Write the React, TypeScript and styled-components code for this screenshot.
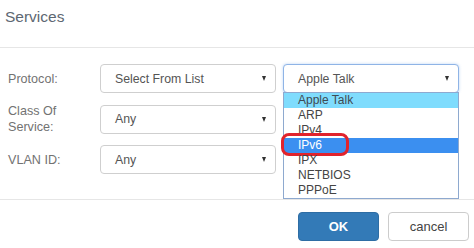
import React from "react";
import styled, { createGlobalStyle, css } from "styled-components";

const Global = createGlobalStyle`
  html, body { margin: 0; padding: 0; background: #ffffff; }
  body { font-family: "Liberation Sans", Arial, sans-serif; }
`;

const Dialog = styled.div`
  width: 474px;
  height: 248px;
  background: #fff;
  display: flex;
  flex-direction: column;
  overflow: hidden;
`;

const Header = styled.div`
  height: 47px;
  border-bottom: 1px solid #e6e6e6;
  padding: 0 5px;
  display: flex;
  align-items: flex-start;
  box-sizing: content-box;
`;

const Title = styled.h4`
  margin: 8px 0 0;
  font-size: 15.5px;
  font-weight: normal;
  color: #5d6772;
`;

const Body = styled.div`
  height: 151px;
  padding: 16px 0 0 8px;
  box-sizing: border-box;
  display: grid;
  grid-template-columns: 85px 176px 176px;
  grid-auto-rows: 29px;
  column-gap: 7px;
  row-gap: 11.5px;
  align-items: center;
`;

const Label = styled.label`
  font-size: 12.6px;
  line-height: 16px;
  color: #727272;
  width: 70px;
`;

const Field = styled.div`
  position: relative;
  height: 29px;
`;

const Select = styled.div<{ $focus?: boolean }>`
  height: 29px;
  box-sizing: border-box;
  border: 1px solid #cfcfcf;
  border-radius: 4px;
  padding: 0 9px 0 14px;
  display: flex;
  align-items: center;
  justify-content: space-between;
  font-size: 12.3px;
  color: #555;
  background: #fff;
  ${(p) =>
    p.$focus &&
    css`
      border-color: #8fb4e6;
      box-shadow: 0 0 3px rgba(102, 160, 233, 0.45);
    `}
`;

const Arrow = styled.span`
  width: 0;
  height: 0;
  border-left: 2.5px solid transparent;
  border-right: 2.5px solid transparent;
  border-top: 5px solid #333;
`;

const List = styled.ul`
  position: absolute;
  top: 28px;
  left: 0;
  width: 100%;
  box-sizing: border-box;
  margin: 0;
  padding: 0;
  list-style: none;
  border: 1px solid #8ea9cf;
  background: #fff;
  z-index: 5;
`;

const Item = styled.li<{ $tone?: "hover" | "selected" }>`
  height: 15px;
  line-height: 15px;
  padding-left: 14px;
  font-size: 12px;
  color: #444;
  position: relative;
  ${(p) =>
    p.$tone === "hover" &&
    css`
      background: #7fdcfd;
      color: #3f4a52;
    `}
  ${(p) =>
    p.$tone === "selected" &&
    css`
      background: #3b8ff0;
      color: #fff;
    `}
`;

const Mark = styled.span`
  position: absolute;
  left: -3px;
  top: -5px;
  width: 68px;
  height: 23px;
  box-sizing: border-box;
  border: 3px solid #e1232c;
  border-radius: 8px;
  pointer-events: none;
`;

const Footer = styled.div`
  flex: 1;
  border-top: 1px solid #e6e6e6;
  display: flex;
  justify-content: flex-end;
  align-items: flex-start;
  gap: 9px;
  padding: 12px 5px 0 0;
`;

const Button = styled.button<{ $primary?: boolean }>`
  width: 81px;
  height: 29px;
  border-radius: 4px;
  font-family: "Liberation Sans", Arial, sans-serif;
  font-size: 13px;
  border: 1px solid #ccc;
  background: #fff;
  color: #444;
  ${(p) =>
    p.$primary &&
    css`
      background: #337ab7;
      border-color: #2e6da4;
      color: #fff;
      font-weight: bold;
    `}
`;

const options = ["Apple Talk", "ARP", "IPv4", "IPv6", "IPX", "NETBIOS", "PPPoE"];

export default function App() {
  return (
    <>
      <Global />
      <Dialog>
        <Header>
          <Title>Services</Title>
        </Header>
        <Body>
          <Label>Protocol:</Label>
          <Select>
            Select From List
            <Arrow />
          </Select>
          <Field>
            <Select $focus>
              Apple Talk
              <Arrow />
            </Select>
            <List>
              {options.map((o) => (
                <Item
                  key={o}
                  $tone={o === "Apple Talk" ? "hover" : o === "IPv6" ? "selected" : undefined}
                >
                  {o}
                  {o === "IPv6" && <Mark />}
                </Item>
              ))}
            </List>
          </Field>
          <Label>Class Of Service:</Label>
          <Select>
            Any
            <Arrow />
          </Select>
          <span />
          <Label>VLAN ID:</Label>
          <Select>
            Any
            <Arrow />
          </Select>
          <span />
        </Body>
        <Footer>
          <Button $primary>OK</Button>
          <Button>cancel</Button>
        </Footer>
      </Dialog>
    </>
  );
}
